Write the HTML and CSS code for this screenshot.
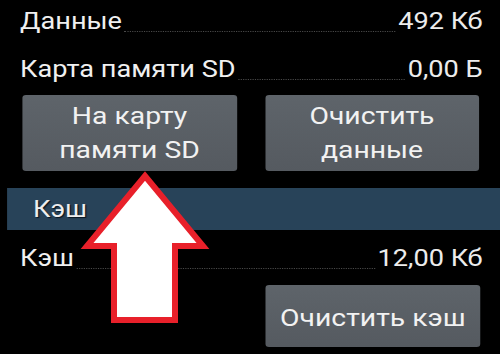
FILE: index.html
```html
<!DOCTYPE html>
<html lang="ru">
<head>
    <meta charset="UTF-8">
    <title>Память приложения</title>
    <link rel="stylesheet" href="styles.css">
</head>
<body>
    <div class="page">
        <!-- the phone screenshot is a bit wider than tall, so the whole screen is stretched -->
        <div class="screen">
            <!-- Storage -->
            <div class="row row-first">
                <span class="label">Данные</span>
                <span class="dots"></span>
                <span class="value">492 Кб</span>
            </div>
            <div class="row row-second">
                <span class="label">Карта памяти SD</span>
                <span class="dots"></span>
                <span class="value">0,00 Б</span>
            </div>

            <div class="buttons">
                <button class="btn">На карту<br>памяти SD</button>
                <button class="btn">Очистить<br>данные</button>
            </div>

            <!-- Cache -->
            <div class="section-header">Кэш</div>
            <div class="row row-cache">
                <span class="label">Кэш</span>
                <span class="dots"></span>
                <span class="value">12,00 Кб</span>
            </div>
            <div class="buttons buttons-right">
                <button class="btn btn-single">Очистить кэш</button>
            </div>
        </div>

        <!-- Red arrow pointing at the SD button -->
        <svg class="arrow" width="500" height="354" viewBox="0 0 500 354">
            <polygon points="145,176 87,246 114,246 114,320 175,320 175,246 203,246"
                     fill="#ffffff" stroke="#e8202a" stroke-width="6" stroke-linejoin="miter"/>
        </svg>
    </div>
</body>
</html>
```

FILE: styles.css
```css
/* General */
body {
    margin: 0;
    padding: 0;
    background: #000;
    font-family: Roboto, "Noto Sans", sans-serif;
    color: #f0f0f0;
}

.page {
    position: relative;
    width: 500px;
    height: 354px;
    overflow: hidden;
}

/* 424 * 1.18 = 500 */
.screen {
    width: 424px;
    transform: scaleX(1.18);
    transform-origin: left top;
}

/* Label ... value rows */
.row {
    display: flex;
    align-items: flex-end;
    height: 26px;
    padding: 0 15px 0 17px;
    font-size: 23px;
    line-height: 26px;
}

.row-first {
    padding-top: 9px;
}

.row-second {
    margin-top: 22px;
}

.row-cache {
    margin-top: 16px;
}

.dots {
    flex: 1;
    height: 0;
    margin: 0 2px 3px 2px;
    border-bottom: 1px dotted #4a4a4a;
}

.value {
    color: #ececec;
}

/* Buttons */
.buttons {
    display: flex;
    gap: 24px;
    padding: 0 18px 0 19px;
    margin-top: 12px;
}

.buttons-right {
    justify-content: flex-end;
    padding-right: 17px;
    margin-top: 13px;
}

.btn {
    flex: 1;
    height: 76px;
    padding: 0;
    border: none;
    border-radius: 3px;
    background: linear-gradient(#5e646a, #555a60);
    color: #f2f2f2;
    font-family: Roboto, "Noto Sans", sans-serif;
    font-size: 24px;
    line-height: 34px;
}

.btn-single {
    flex: none;
    width: 182px;
    height: 62px;
    padding-top: 4px;
}

/* Section header */
.section-header {
    box-sizing: border-box;
    height: 42px;
    margin: 17px 0 0 6px;
    padding: 2px 0 0 22px;
    background: #284359;
    font-size: 23px;
    line-height: 40px;
    color: #eeeeee;
    text-shadow: 1px 1px 1px #0a1520;
}

/* Overlay arrow */
.arrow {
    position: absolute;
    left: 0;
    top: 0;
}
```
